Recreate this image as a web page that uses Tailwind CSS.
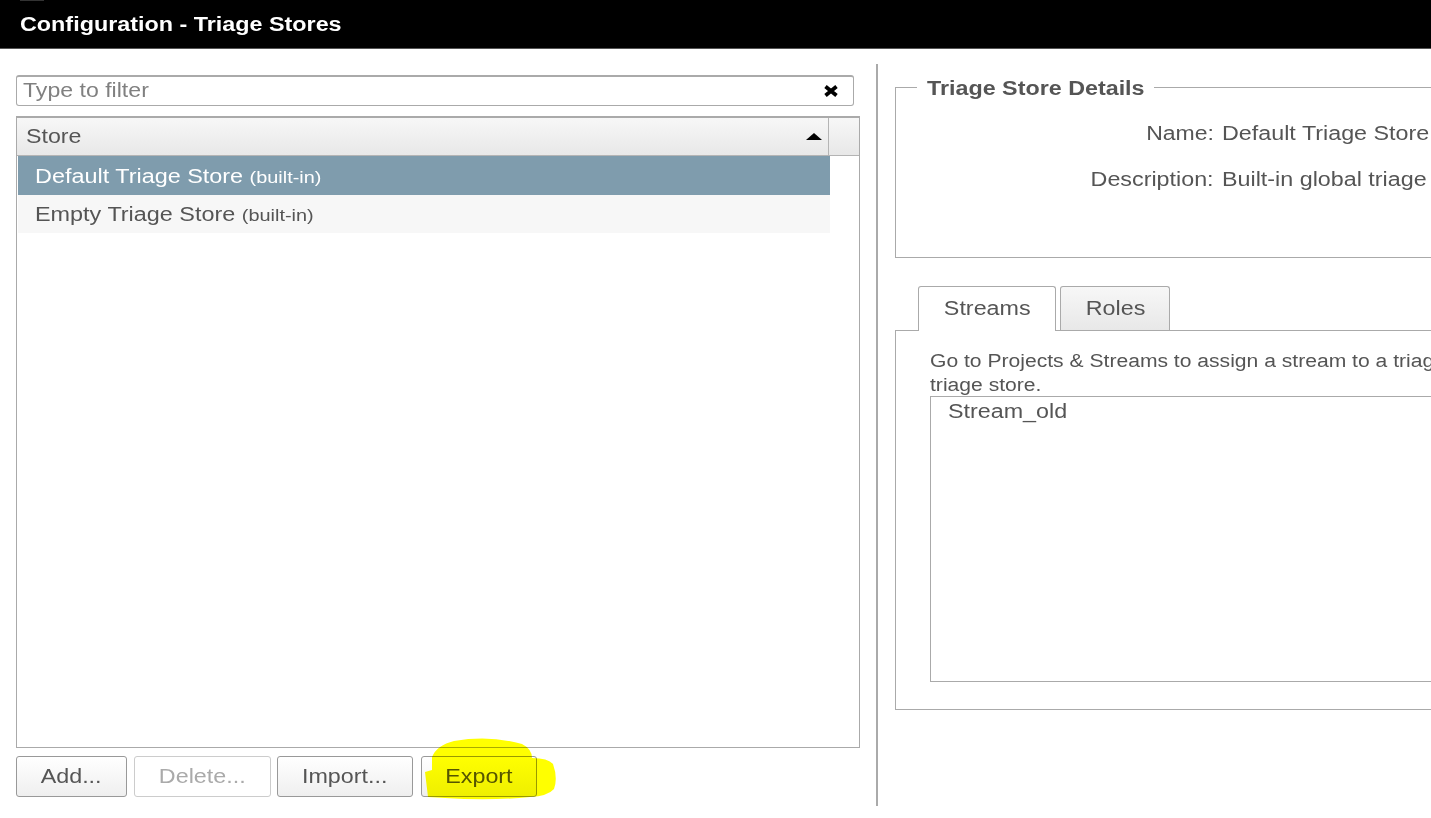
<!DOCTYPE html>
<html lang="en">
<head>
    <meta charset="UTF-8">
    <title>Configuration - Triage Stores</title>
    <script src="https://cdn.jsdelivr.net/npm/@tailwindcss/browser@4"></script>
</head>
<body class="bg-white font-['Liberation_Sans',Arial,sans-serif] text-[#555] overflow-hidden">
<div class="relative w-[1431px] h-[818px] overflow-hidden">
    <header class="relative h-[49px] bg-black border-b border-[#555] pl-5 flex items-center">
        <div class="absolute left-5 top-0 w-6 h-px bg-[#333]"></div>
        <h1 class="text-[20px] font-bold text-white inline-block origin-left scale-x-[1.167] whitespace-nowrap">Configuration - Triage Stores</h1>
    </header>

    <main class="flex h-[757px] pt-[15px]">
        <!-- store list -->
        <section class="w-[844px] ml-4 shrink-0 flex flex-col pt-[11px]">
            <div class="h-[31px] w-[838px] shrink-0 border border-[#aaa] border-t-2 rounded-[3px] flex items-center justify-between pl-[6px] pr-[14px]">
                <span class="text-[20px] text-[#808080] inline-block origin-left scale-x-[1.155] -mt-[2px]">Type to filter</span>
                <svg class="w-[16px] h-[12px]" viewBox="0 0 16 12"><path d="M2.5 1.5 L13.5 10.5 M13.5 1.5 L2.5 10.5" stroke="#000" stroke-width="3.8" fill="none"/></svg>
            </div>
            <div class="mt-[10px] h-[632px] shrink-0 border border-[#aaa] border-t-2 flex flex-col">
                <div class="h-[38px] shrink-0 flex bg-gradient-to-b from-[#f7f7f7] to-[#e8e8e8] border-b border-[#b4b4b4]">
                    <div class="w-[812px] border-r border-[#b4b4b4] flex items-center justify-between pl-[9px] pr-[6px]">
                        <span class="text-[20px] text-[#555] inline-block origin-left scale-x-[1.16] -mt-[2px]">Store</span>
                        <svg class="w-[16px] h-[8px]" viewBox="0 0 16 8"><path d="M8 0 L16 7 H0 Z" fill="#000"/></svg>
                    </div>
                </div>
                <div class="ml-px w-[812px] h-[39px] bg-[#7f9cad] text-white pl-[17px] pt-[8px] leading-[24px]">
                    <span class="inline-block origin-left scale-x-[1.17] text-[20px] whitespace-nowrap">Default Triage Store <span class="text-[17px]">(built-in)</span></span>
                </div>
                <div class="ml-px w-[812px] h-[38px] bg-[#f7f7f7] text-[#555] pl-[17px] pt-[7px] leading-[24px]">
                    <span class="inline-block origin-left scale-x-[1.17] text-[20px] whitespace-nowrap">Empty Triage Store <span class="text-[17px]">(built-in)</span></span>
                </div>
            </div>
            <div class="mt-[8px] flex text-[20px]">
                <button class="w-[111px] h-[41px] pb-[2px] border border-[#999] rounded-[3px] bg-gradient-to-b from-white to-[#efefef]"><span class="inline-block scale-x-[1.165]">Add...</span></button>
                <button class="w-[137px] h-[41px] pb-[2px] border border-[#ccc] rounded-[3px] text-[#aaa] ml-[7px]"><span class="inline-block scale-x-[1.165]">Delete...</span></button>
                <button class="w-[136px] h-[41px] pb-[2px] border border-[#999] rounded-[3px] bg-gradient-to-b from-white to-[#efefef] ml-[6px]"><span class="inline-block scale-x-[1.165]">Import...</span></button>
                <button class="w-[116px] h-[41px] pb-[2px] border border-[#999] rounded-[3px] bg-gradient-to-b from-white to-[#efefef] ml-[8px]"><span class="inline-block scale-x-[1.165]">Export</span></button>
            </div>
        </section>

        <div class="w-[2px] bg-[#aaa] ml-4 h-[742px] shrink-0"></div>

        <!-- details -->
        <section class="ml-[17px] w-[600px] shrink-0">
            <div class="relative mt-[23px] h-[171px] border border-[#aaa] border-r-0 text-[20px]">
                <div class="absolute -top-[15px] left-[21px] w-[237px] pl-[10px] bg-white font-bold text-[#555] whitespace-nowrap">
                    <span class="inline-block origin-left scale-x-[1.165]">Triage Store Details</span>
                </div>
                <div class="mt-[33px] flex leading-[24px] whitespace-nowrap">
                    <span class="w-[318px] shrink-0 text-right"><span class="inline-block origin-right scale-x-[1.15]">Name:</span></span>
                    <span class="ml-2"><span class="inline-block origin-left scale-x-[1.165]">Default Triage Store</span></span>
                </div>
                <div class="mt-[22px] flex leading-[24px] whitespace-nowrap">
                    <span class="w-[318px] shrink-0 text-right"><span class="inline-block origin-right scale-x-[1.165]">Description:</span></span>
                    <span class="ml-2"><span class="inline-block origin-left scale-x-[1.165]">Built-in global triage</span></span>
                </div>
            </div>

            <div class="mt-[28px] flex pl-[23px] gap-[4px] h-[45px] text-[20px]">
                <div class="w-[138px] h-[45px] pb-[2px] border border-[#aaa] border-b-0 rounded-t-[3px] bg-white flex items-center justify-center relative z-10"><span class="inline-block scale-x-[1.165]">Streams</span></div>
                <div class="w-[110px] h-[44px] pb-[2px] pl-px border border-[#aaa] border-b-0 rounded-t-[3px] bg-gradient-to-b from-[#f7f7f7] to-[#e8e8e8] flex items-center justify-center"><span class="inline-block scale-x-[1.165]">Roles</span></div>
            </div>
            <div class="-mt-[1px] h-[380px] border border-[#aaa] border-r-0 pl-[34px] pt-[18px]">
                <p class="text-[18px] leading-[24px] whitespace-nowrap origin-left scale-x-[1.172]">Go to Projects &amp; Streams to assign a stream to a triage<br>triage store.</p>
                <div class="h-[286px] border border-[#aaa] border-r-0 pl-[17px] pt-[2px] text-[20px] leading-[24px] -mt-[1px]"><span class="inline-block origin-left scale-x-[1.165]">Stream_old</span></div>
            </div>
        </section>
    </main>

    <!-- highlighter scribble over the export button -->
    <svg class="absolute left-0 top-0 mix-blend-multiply pointer-events-none" width="1431" height="818">
        <path d="M432 757 Q437 745 454 741 Q490 735 522 744 Q532 749 532 758 Q548 758 553 764 Q558 778 554 789 Q548 796 530 797 Q490 801 445 798 L428 797 L425 772 L432 770 Z" fill="#ffff00"/>
    </svg>
</div>
</body>
</html>
